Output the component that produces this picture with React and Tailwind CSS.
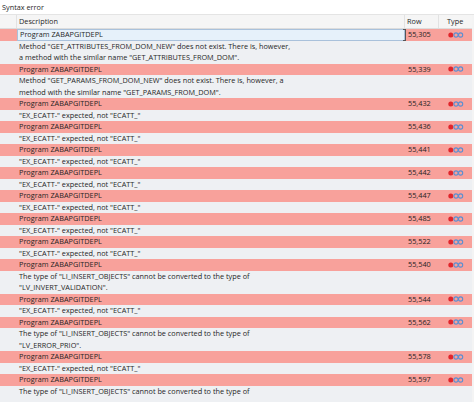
const ecatt = '"EX_ECATT-" expected, not "ECATT_"';
const typeOf = 'The type of "LI_INSERT_OBJECTS" cannot be converted to the type of';

const messages = [
  {
    row: "55,305",
    lines: [
      'Method "GET_ATTRIBUTES_FROM_DOM_NEW" does not exist. There is, however,',
      'a method with the similar name "GET_ATTRIBUTES_FROM_DOM".',
    ],
  },
  {
    row: "55,339",
    lines: [
      'Method "GET_PARAMS_FROM_DOM_NEW" does not exist. There is, however, a',
      'method with the similar name "GET_PARAMS_FROM_DOM".',
    ],
  },
  { row: "55,432", lines: [ecatt] },
  { row: "55,436", lines: [ecatt] },
  { row: "55,441", lines: [ecatt] },
  { row: "55,442", lines: [ecatt] },
  { row: "55,447", lines: [ecatt] },
  { row: "55,485", lines: [ecatt] },
  { row: "55,522", lines: [ecatt] },
  { row: "55,540", lines: [typeOf, '"LV_INVERT_VALIDATION".'] },
  { row: "55,544", lines: [ecatt] },
  { row: "55,562", lines: [typeOf, '"LV_ERROR_PRIO".'] },
  { row: "55,578", lines: [ecatt] },
  { row: "55,597", lines: [typeOf, ""] },
];

// red light on, the other two off
function TypeLights() {
  return (
    <svg width="16" height="6" viewBox="0 0 16 6">
      <circle cx="2.8" cy="3" r="2.5" fill="#e0262c" />
      <circle cx="8" cy="3" r="2.1" fill="none" stroke="#5b8fd2" strokeWidth="1.1" />
      <circle cx="12.6" cy="3" r="2.1" fill="none" stroke="#5b8fd2" strokeWidth="1.1" />
    </svg>
  );
}

function ProgramRow({ row, selected }) {
  return (
    <div className="flex h-[11.5px] bg-[#f8a19b] leading-[11.5px]">
      <div className="w-[17px] shrink-0" />
      <div
        className={`w-[388px] shrink-0 pl-[2px] ${
          selected ? "relative bg-[#e6f1fa] border border-[#a9c1db] leading-[9.5px] pl-[1px]" : ""
        }`}
      >
        Program ZABAPGITDEPL
        {selected && (
          <span className="absolute right-[-2px] top-[-1px] h-[11.5px] w-[3px] border border-l-0 border-[#555]" />
        )}
      </div>
      <div className="w-[34px] shrink-0 pl-[3px]">{row}</div>
      <div className="w-[31px] shrink-0 flex items-center pl-[9px]">
        <TypeLights />
      </div>
    </div>
  );
}

function TextRow({ text }) {
  return (
    <div className="flex h-[11.5px] bg-[#eef0f3] leading-[11.5px]">
      <div className="w-[17px] shrink-0" />
      <div className="w-[388px] shrink-0 pl-[2px] whitespace-nowrap">{text}</div>
    </div>
  );
}

export default function App() {
  return (
    <div
      className="w-[474px] h-[402px] overflow-hidden bg-white text-[7.3px] text-[#1f1f1f]"
      style={{ fontFamily: '"Open Sans", "Noto Sans", sans-serif' }}
    >
      <div className="h-[15px] pl-[2px] leading-[14px] bg-white border-b border-[#e4e4e4]">Syntax error</div>
      <div className="flex pr-[2px] bg-[#f4f4f4]">
        <div className="flex-1 bg-[#eef0f3]">
          <div className="flex h-[14px] leading-[13px] bg-[#f5f5f5] border-b border-[#dcdcdc]">
            <div className="w-[17px] shrink-0 border-r border-[#e2e2e2]" />
            <div className="w-[388px] shrink-0 pl-[2px] border-r border-[#e2e2e2]">Description</div>
            <div className="w-[34px] shrink-0 pl-[2px] border-r border-[#e2e2e2]">Row</div>
            <div className="flex-1 pl-[8px]">Type</div>
          </div>
          {messages.map((m, i) => (
            <div key={i}>
              <ProgramRow row={m.row} selected={i === 0} />
              {m.lines.map((line, j) => (
                <TextRow key={j} text={line} />
              ))}
            </div>
          ))}
        </div>
      </div>
    </div>
  );
}
